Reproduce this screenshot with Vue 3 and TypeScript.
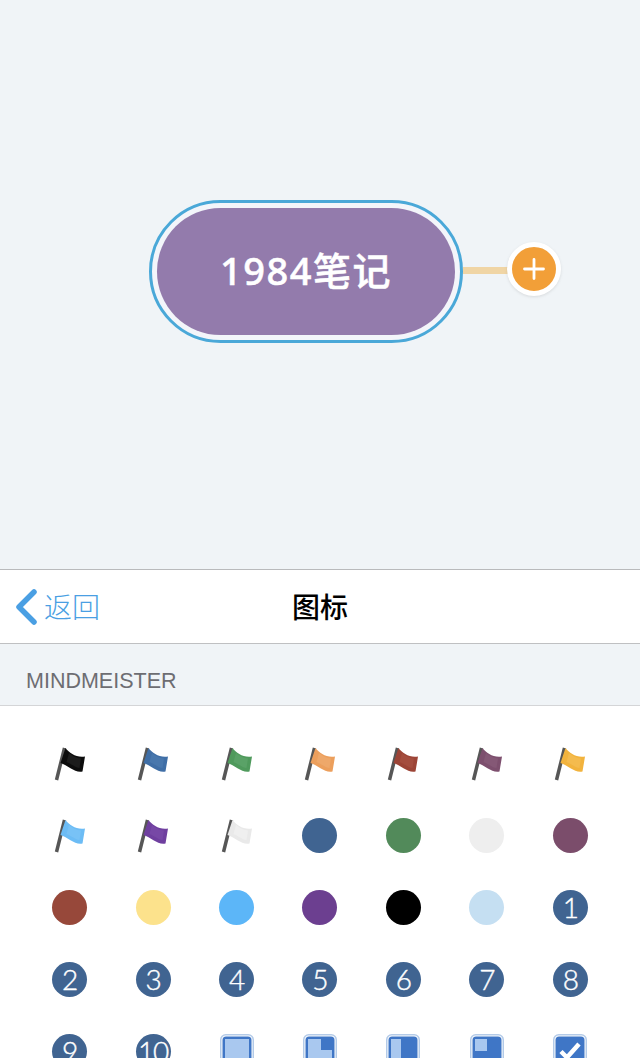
<script setup lang="ts">
// icon picker sheet under the mind map canvas
type Icon =
  | { kind: 'flag'; color: string; shade: string }
  | { kind: 'dot'; color: string }
  | { kind: 'num'; n: number }
  | { kind: 'box'; panel: string }

const flag = (color: string, shade: string): Icon => ({ kind: 'flag', color, shade })
const dot = (color: string): Icon => ({ kind: 'dot', color })
const num = (n: number): Icon => ({ kind: 'num', n })
const box = (panel: string): Icon => ({ kind: 'box', panel })

const icons: Icon[] = [
  flag('#0c0c0c', '#1c1c1c'),
  flag('#3f6ea6', '#4877ad'),
  flag('#4f9a5c', '#5aa267'),
  flag('#ec9f5c', '#eea86a'),
  flag('#9c4436', '#a44d3e'),
  flag('#7d4f6e', '#855876'),
  flag('#f2b33d', '#f4bb4e'),
  flag('#6cbcf5', '#78c2f6'),
  flag('#6f3f9f', '#7748a6'),
  flag('#e9e9e9', '#efefef'),
  dot('#406491'),
  dot('#528a5a'),
  dot('#eeeeee'),
  dot('#7b4d6b'),
  dot('#97483a'),
  dot('#fce28c'),
  dot('#5cb6f8'),
  dot('#6c3f90'),
  dot('#000000'),
  dot('#c5dff2'),
  num(1),
  num(2),
  num(3),
  num(4),
  num(5),
  num(6),
  num(7),
  num(8),
  num(9),
  num(10),
  box('M5 5h24v30H5z'),
  box('M5 5h13v11h11v19H5z'),
  box('M5 5h10v30H5z'),
  box('M5 5h12v12H5z'),
  { kind: 'box', panel: '' },
]
</script>

<template>
  <div class="screen">
    <section class="canvas">
      <div class="node-ring">
        <div class="node">1984笔记</div>
      </div>
      <div class="link"></div>
      <button class="add">
        <svg width="22" height="22" viewBox="0 0 22 22">
          <path d="M11 1.500v19M1.500 11h19" stroke="#fff" stroke-width="2.800" stroke-linecap="round" />
        </svg>
      </button>
    </section>

    <header class="nav">
      <div class="back">
        <svg width="24" height="38" viewBox="0 0 24 38">
          <path d="M20 4 5 19l15 15" fill="none" stroke="#4a9fe3" stroke-width="5.500" stroke-linecap="round" stroke-linejoin="round" />
        </svg>
        <span class="back-label">返回</span>
      </div>
      <h1>图标</h1>
    </header>

    <div class="section-title">MINDMEISTER</div>

    <div class="grid">
      <div v-for="(icon, i) in icons" :key="i" class="cell">
        <svg v-if="icon.kind === 'flag'" width="36" height="38" viewBox="0 0 36 38">
          <path d="M12.500 4 4.500 36" stroke="#565656" stroke-width="3.500" />
          <path d="M13.500 4c4 5 11 10 19.500 8.500L30.500 27.500c-7 2-14.500-6-22-8.500z" :fill="icon.color" />
          <path d="M17 9c4 3 8 5.500 12 5.500l-1.500 9.500c-4-.5-8-4-13-6z" :fill="icon.shade" />
        </svg>
        <span v-else-if="icon.kind === 'dot'" class="dot" :style="{ background: icon.color }"></span>
        <span v-else-if="icon.kind === 'num'" class="dot num">{{ icon.n }}</span>
        <svg v-else width="34" height="34" viewBox="0 0 34 34">
          <rect x=".75" y=".75" width="32.500" height="36" rx="5" fill="#fff" stroke="#b4cbe8" stroke-width="1.500" />
          <rect x="2.500" y="2.500" width="29" height="34" rx="3.500" fill="#3f76c6" />
          <path v-if="icon.panel" :d="icon.panel" fill="#a9c8ef" />
          <path v-else d="M8 17.500l6 6L26 10" fill="none" stroke="#fff" stroke-width="4.500" />
        </svg>
      </div>
    </div>
  </div>
</template>

<style scoped>
.screen {
  display: flex;
  flex-direction: column;
  width: 640px;
  height: 1058px;
  overflow: hidden;
  background: #fff;
  font-family: "Noto Sans", "Noto Sans CJK SC", sans-serif;
}
.canvas {
  position: relative;
  flex: none;
  height: 569px;
  background: #f0f4f7;
}
.node-ring {
  position: absolute;
  left: 149px;
  top: 200px;
  box-sizing: border-box;
  width: 314px;
  height: 143px;
  padding: 5px;
  border: 3px solid #4aa8d8;
  border-radius: 72px;
  background: #f3f5fa;
}
.node {
  display: flex;
  align-items: center;
  justify-content: center;
  box-sizing: border-box;
  height: 100%;
  padding-bottom: 6px;
  border-radius: 64px;
  background: #937bac;
  color: #fff;
  font-size: 38px;
  font-weight: 500;
  letter-spacing: 1.500px;
  -webkit-text-stroke: 0.5px #fff;
}
.link {
  position: absolute;
  left: 463px;
  top: 267px;
  width: 50px;
  height: 7px;
  background: #f0d5a5;
}
.add {
  position: absolute;
  left: 507px;
  top: 242px;
  display: flex;
  align-items: center;
  justify-content: center;
  box-sizing: border-box;
  width: 54px;
  height: 54px;
  padding: 0;
  border: 5px solid #fff;
  border-radius: 50%;
  background: #f29f38;
  box-shadow: 0 1px 3px rgba(120, 120, 120, 0.2);
}
.nav {
  position: relative;
  display: flex;
  flex: none;
  align-items: center;
  justify-content: center;
  box-sizing: border-box;
  height: 75px;
  border-top: 1px solid #b9babc;
  border-bottom: 1px solid #bfc0c2;
  background: #fff;
}
.nav h1 {
  margin: 0;
  color: #000;
  font-size: 28px;
  font-weight: 500;
  line-height: 1;
}
.back {
  position: absolute;
  left: 14px;
  top: 17px;
  display: flex;
  align-items: center;
  gap: 6px;
  color: #4a9fe3;
  font-size: 28px;
  font-weight: 300;
}
.back-label {
  margin-top: -1px;
}
.section-title {
  flex: none;
  box-sizing: border-box;
  height: 62px;
  padding: 23px 0 0 26px;
  border-bottom: 1px solid #d4d5d7;
  background: #f0f4f7;
  color: #6d6d72;
  font-family: "Liberation Sans", sans-serif;
  font-size: 21.500px;
  line-height: 28px;
}
.grid {
  display: grid;
  flex: none;
  grid-template-columns: repeat(7, 1fr);
  grid-auto-rows: 72px;
  padding: 21px 28px 0;
}
.cell {
  display: flex;
  align-items: center;
  justify-content: center;
}
.dot {
  display: flex;
  align-items: center;
  justify-content: center;
  width: 35px;
  height: 35px;
  border-radius: 50%;
}
.num {
  background: #406491;
  color: #fff;
  font-family: Lato, sans-serif;
  font-size: 28px;
  font-weight: 300;
  letter-spacing: -1px;
  -webkit-text-stroke: 0.4px #fff;
}
</style>
